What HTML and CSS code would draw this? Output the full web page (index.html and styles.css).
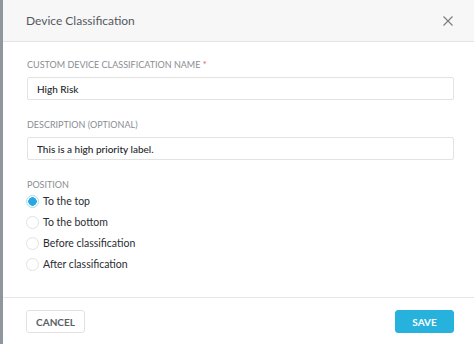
FILE: index.html
```html
<!DOCTYPE html>
<html lang="en">
<head>
    <meta charset="UTF-8">
    <meta name="viewport" content="width=device-width, initial-scale=1.0">
    <title>Device Classification</title>
    <link rel="stylesheet" href="styles.css">
</head>
<body>
    <div class="modal">
        <div class="modal-header">
            <h2 class="modal-title">Device Classification</h2>
            <button class="close-btn" aria-label="Close">
                <svg width="10" height="10" viewBox="0 0 10 10">
                    <path d="M0.5 0.5 L9.5 9.5 M9.5 0.5 L0.5 9.5" stroke="#7a7a7a" stroke-width="1.1" fill="none"/>
                </svg>
            </button>
        </div>
        <div class="modal-body">
            <div class="field">
                <label class="field-label">Custom device classification name <span class="required">*</span></label>
                <input class="text-input" type="text" value="High Risk">
            </div>
            <div class="field">
                <label class="field-label">Description (optional)</label>
                <input class="text-input" type="text" value="This is a high priority label.">
            </div>
            <div class="field">
                <label class="field-label">Position</label>
                <div class="radio-list">
                    <label class="radio-row"><span class="radio checked"></span>To the top</label>
                    <label class="radio-row"><span class="radio"></span>To the bottom</label>
                    <label class="radio-row"><span class="radio"></span>Before classification</label>
                    <label class="radio-row"><span class="radio"></span>After classification</label>
                </div>
            </div>
        </div>
        <div class="modal-footer">
            <button class="btn btn-cancel">Cancel</button>
            <button class="btn btn-save">Save</button>
        </div>
    </div>
</body>
</html>
```

FILE: styles.css
```css
*{
    box-sizing: border-box;
    margin: 0;
    padding: 0;
}
body{
    width: 474px;
    height: 344px;
    background: #fff;
    border-left: 3px solid #8f969e;
    font-family: Lato, "Open Sans", sans-serif;
    overflow: hidden;
}
.modal{
    display: flex;
    flex-direction: column;
    height: 100%;
}
.modal-header{
    display: flex;
    align-items: center;
    justify-content: space-between;
    height: 42px;
    padding: 0 21px 0 23px;
    background: #f7f7f7;
    border-bottom: 1px solid #e4e4e4;
}
.modal-title{
    font-size: 12px;
    font-weight: normal;
    color: #55595f;
}
.close-btn{
    border: none;
    background: none;
    display: flex;
}
.modal-body{
    flex: 1;
    padding: 17px 20px 0 24px;
}
.field{
    margin-bottom: 19px;
}
.field-label{
    display: block;
    font-size: 9px;
    line-height: 11px;
    text-transform: uppercase;
    color: #8a8d92;
    margin-bottom: 7px;
}
.required{
    color: #e2574c;
}
.text-input{
    display: block;
    width: 100%;
    height: 23px;
    padding: 0 9px;
    border: 1px solid #e3e3e3;
    border-radius: 2px;
    font-family: Lato, "Open Sans", sans-serif;
    font-size: 10px;
    font-weight: 500;
    color: #24272b;
    outline: none;
}
.radio-list{
    display: flex;
    flex-direction: column;
    gap: 7px;
    margin-top: -3px;
}
.radio-row{
    display: flex;
    align-items: center;
    height: 14px;
    font-size: 10.5px;
    color: #2a2d32;
}
.radio{
    width: 13px;
    height: 13px;
    border-radius: 50%;
    border: 1px solid #e2e2e2;
    margin-right: 4px;
    margin-left: -1px;
    background: #fff;
}
.radio.checked{
    border-color: #a8dcef;
    background: radial-gradient(circle, #2aa7e0 0 4px, #fff 4.5px);
}
.modal-footer{
    display: flex;
    justify-content: space-between;
    align-items: center;
    height: 47px;
    padding: 1px 20px 0 23px;
    border-top: 1px solid #e6e6e6;
}
.btn{
    width: 59px;
    height: 23px;
    border-radius: 3px;
    font-family: Lato, "Open Sans", sans-serif;
    font-size: 10px;
    font-weight: bold;
    text-transform: uppercase;
}
.btn-cancel{
    background: #fff;
    border: 1px solid #e2e2e2;
    color: #5a5e66;
}
.btn-save{
    background: #27b1dd;
    border: 1px solid #27b1dd;
    color: #fff;
}
```
